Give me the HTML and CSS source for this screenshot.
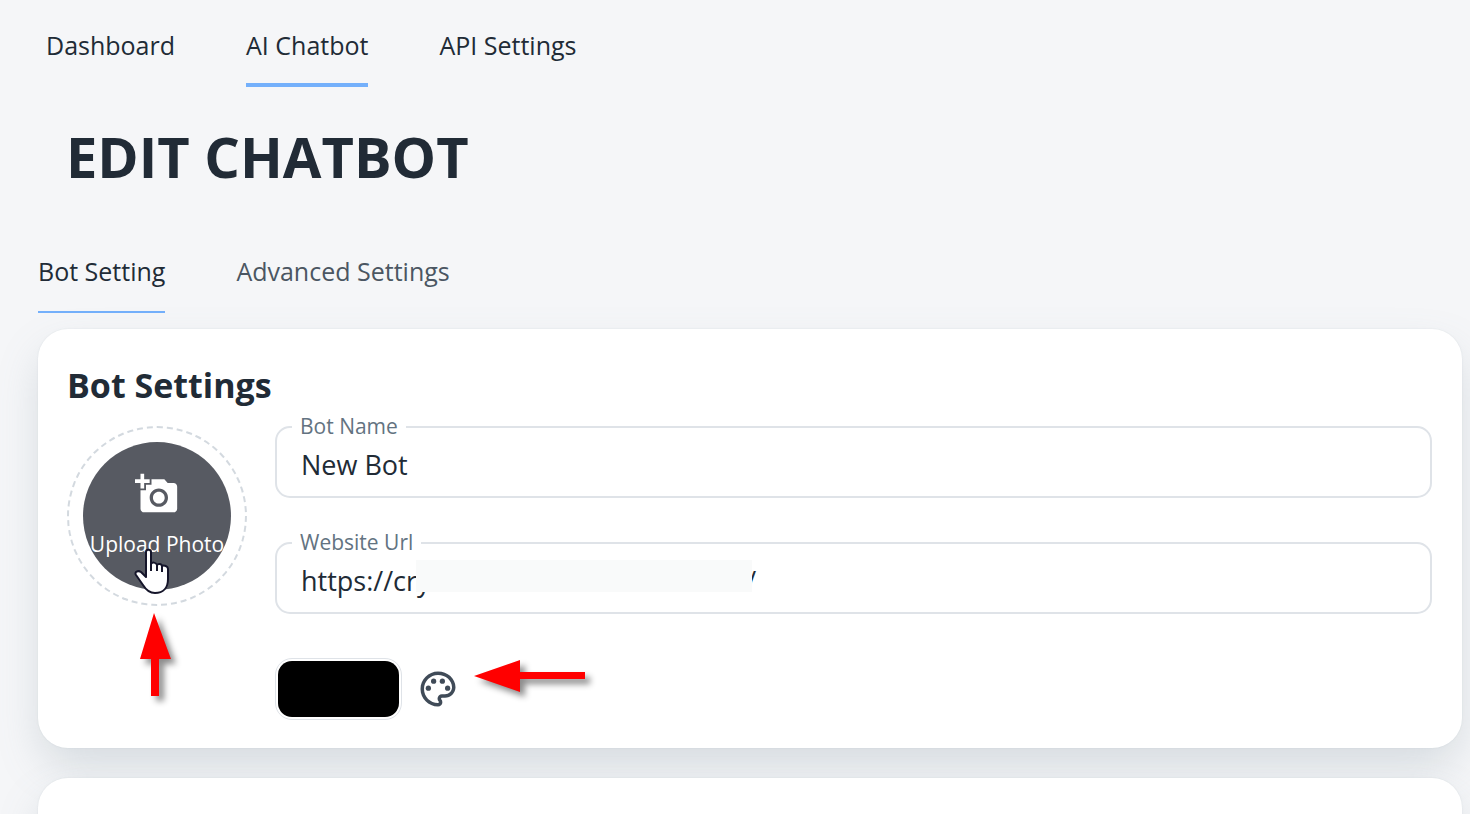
FILE: index.html
```html
<!DOCTYPE html>
<html lang="en">
<head>
  <meta charset="UTF-8">
  <title>Edit Chatbot</title>
  <link rel="stylesheet" href="styles.css">
</head>
<body>
  <nav class="main-nav">
    <a href="#">Dashboard</a>
    <a href="#" class="active">AI Chatbot</a>
    <a href="#">API Settings</a>
  </nav>

  <h1 class="page-title">EDIT CHATBOT</h1>

  <nav class="sub-nav">
    <a href="#" class="active">Bot Setting</a>
    <a href="#">Advanced Settings</a>
  </nav>

  <main class="cards">
    <section class="card">
      <h2 class="card-title">Bot Settings</h2>
      <div class="bot-form">
        <div class="avatar">
          <button type="button" class="upload">
            <svg class="upload-icon" viewBox="0 0 24 24" width="44" height="44" fill="#fff">
              <path d="M3 4V1h2v3h3v2H5v3H3V6H0V4h3zm3 6V7h3V4h7l1.830 2H21c1.100 0 2 .900 2 2v12c0 1.100-.900 2-2 2H5c-1.100 0-2-.900-2-2V10h3zm7 9c2.760 0 5-2.240 5-5s-2.240-5-5-5-5 2.240-5 5 2.240 5 5 5zm-3.200-5c0 1.770 1.430 3.200 3.200 3.200s3.200-1.430 3.200-3.200-1.430-3.200-3.200-3.200-3.200 1.430-3.200 3.200z"/>
            </svg>
            <span>Upload Photo</span>
          </button>
          <svg class="hand" viewBox="0 0 38 48" width="38" height="48">
            <path d="M12 4c0-3 5-3 5 0v12c1-2 5-2 6 1 1-2 5-1 5 1 2-1 6 0 6 3v10c0 9-5 14-13 14-6 0-9-3-12-8L2 27c-2-3 2-5 5-3l5 5z" fill="#fff" stroke="#15152a" stroke-width="2" stroke-linejoin="round"/>
            <path d="M17 15v8M23 16v7M28 18v6" fill="none" stroke="#15152a" stroke-width="2"/>
          </svg>
          <svg class="arrow arrow-up" viewBox="0 0 32 84" width="32" height="84">
            <path d="M14 0l17 46H19v37h-8V46H0z" fill="#f00"/>
          </svg>
        </div>

        <div class="fields">
          <div class="field">
            <label for="bot-name">Bot Name</label>
            <input type="text" id="bot-name" value="New Bot">
          </div>
          <div class="field">
            <label for="website-url">Website Url</label>
            <input type="text" id="website-url" value="https://cry&nbsp;&nbsp;&nbsp;&nbsp;&nbsp;&nbsp;&nbsp;&nbsp;&nbsp;&nbsp;&nbsp;&nbsp;&nbsp;&nbsp;&nbsp;&nbsp;&nbsp;&nbsp;&nbsp;&nbsp;&nbsp;&nbsp;&nbsp;&nbsp;&nbsp;&nbsp;&nbsp;&nbsp;&nbsp;&nbsp;&nbsp;&nbsp;&nbsp;&nbsp;&nbsp;&nbsp;&nbsp;&nbsp;&nbsp;&nbsp;&nbsp;&nbsp;&nbsp;&nbsp;&nbsp;/">
            <span class="mask"></span>
          </div>
          <div class="color-row">
            <input type="color" class="swatch" value="#000000" aria-label="Color">
            <button type="button" class="palette" aria-label="Palette">
              <svg viewBox="0 0 24 24" width="42" height="42" fill="#404b58">
                <path d="M12 22C6.490 22 2 17.510 2 12S6.490 2 12 2s10 4.040 10 9c0 3.310-2.690 6-6 6h-1.770c-.280 0-.500.220-.500.500 0 .120.050.230.130.330.410.470.640 1.060.640 1.670A2.500 2.500 0 0 1 12 22zm0-18c-4.410 0-8 3.590-8 8s3.590 8 8 8c.280 0 .500-.220.500-.500a.540.540 0 0 0-.140-.350c-.410-.460-.630-1.050-.630-1.650a2.500 2.500 0 0 1 2.500-2.500H16c2.210 0 4-1.790 4-4 0-3.860-3.590-7-8-7z"/>
                <circle cx="6.500" cy="11.500" r="1.500"/>
                <circle cx="9.500" cy="7.500" r="1.500"/>
                <circle cx="14.500" cy="7.500" r="1.500"/>
                <circle cx="17.500" cy="11.500" r="1.500"/>
              </svg>
            </button>
            <svg class="arrow arrow-left" viewBox="0 0 112 32" width="112" height="32">
              <path d="M0 16L46 0v12h65v7H46v13z" fill="#f00"/>
            </svg>
          </div>
        </div>
      </div>
    </section>

    <section class="card"></section>
  </main>
</body>
</html>
```

FILE: styles.css
```css
* {
  box-sizing: border-box;
}

body {
  margin: 0;
  padding: 27px 8px 0 38px;
  height: 100vh;
  overflow: hidden;
  background: #f5f6f8;
  color: #212b36;
  font-family: "Open Sans", "Noto Sans", sans-serif;
  font-size: 25px;
  line-height: 36px;
}

h1, h2 {
  margin: 0;
}

button {
  border: none;
  padding: 0;
  font-family: inherit;
  cursor: pointer;
}

.main-nav, .sub-nav {
  display: flex;
  gap: 71px;
}

.main-nav {
  padding-left: 8px;
}

.main-nav a, .sub-nav a {
  color: #212b36;
  text-decoration: none;
}

.main-nav a {
  padding-bottom: 20px;
  border-bottom: 4px solid transparent;
}

.sub-nav a {
  padding-bottom: 22px;
  border-bottom: 2px solid transparent;
  color: #4b5662;
}

.main-nav a.active, .sub-nav a.active {
  color: #212b36;
  border-color: #74b0fb;
}

.page-title {
  margin: 33px 0 61px;
  padding-left: 28px;
  font-size: 56px;
  line-height: 72px;
}

.cards {
  display: flex;
  flex-direction: column;
  gap: 30px;
  margin-top: 16px;
}

.card {
  position: relative;
  min-height: 80px;
  padding: 30px 30px 28px 29px;
  border-radius: 30px;
  background: #fff;
  box-shadow: 0 0 2px rgba(145, 158, 171, 0.2), 0 20px 44px -4px rgba(120, 138, 150, 0.26);
}

.card-title {
  font-size: 34px;
  font-weight: 700;
  line-height: 52px;
}

.bot-form {
  display: flex;
  gap: 28px;
  margin-top: 15px;
}

/* avatar */
.avatar {
  position: relative;
  flex: none;
  width: 180px;
  height: 180px;
  padding: 14px;
  border: 2px dashed #d3d9df;
  border-radius: 50%;
}

.upload {
  display: flex;
  flex-direction: column;
  align-items: center;
  justify-content: center;
  gap: 12px;
  width: 100%;
  height: 100%;
  border-radius: 50%;
  background: #575a62;
  color: #fff;
  font-size: 21px;
  line-height: 32px;
  white-space: nowrap;
}

.hand {
  position: absolute;
  left: 65px;
  top: 120px;
}

.arrow {
  position: absolute;
  filter: drop-shadow(5px 5px 3px rgba(0, 0, 0, 0.45));
}

.arrow-up {
  left: 71px;
  top: 185px;
}

/* inputs */
.fields {
  display: flex;
  flex: 1;
  flex-direction: column;
  gap: 44px;
}

.field {
  position: relative;
}

.field label {
  position: absolute;
  left: 17px;
  top: -16px;
  padding: 0 8px;
  background: #fff;
  color: #637381;
  font-size: 21px;
  line-height: 32px;
}

.field input {
  display: block;
  width: 100%;
  height: 72px;
  padding: 4px 24px 0;
  border: 2px solid #dfe3e8;
  border-radius: 15px;
  outline: none;
  background: transparent;
  color: #212b36;
  font-family: inherit;
  font-size: 27px;
}

.mask {
  position: absolute;
  left: 141px;
  top: 18px;
  width: 336px;
  height: 32px;
  background: #f9fafa;
}

.color-row {
  position: relative;
  display: flex;
  align-items: center;
  gap: 15px;
}

.swatch {
  width: 127px;
  height: 62px;
  padding: 2px;
  border: 1px solid #dfe3e8;
  border-radius: 17px;
  background: #fff;
}

.swatch::-webkit-color-swatch-wrapper {
  padding: 0;
}

.swatch::-webkit-color-swatch {
  border: none;
  border-radius: 14px;
}

.palette {
  display: flex;
  background: none;
}

.arrow-left {
  left: 199px;
  top: 2px;
}
```
